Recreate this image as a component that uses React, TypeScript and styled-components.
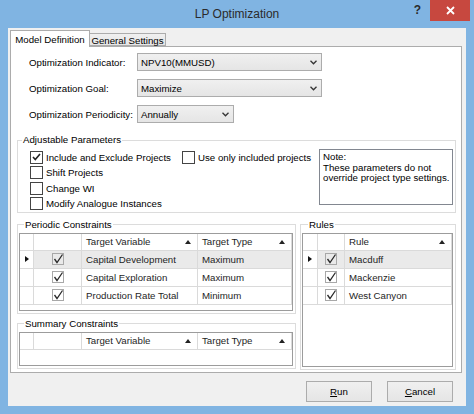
import styled, { createGlobalStyle } from "styled-components";

const GlobalStyle = createGlobalStyle`
  html, body {
    margin: 0;
    padding: 0;
    background: #80b4e2;
  }
  * {
    box-sizing: border-box;
  }
  body {
    font-family: "Liberation Sans", Arial, sans-serif;
    font-size: 9.7px;
    color: #000;
  }
`;

const Window = styled.div`
  width: 474px;
  height: 414px;
  background: #80b4e2;
  display: flex;
  flex-direction: column;
  overflow: hidden;
`;

const TitleBar = styled.div`
  height: 28px;
  display: grid;
  grid-template-columns: 1fr auto 1fr;
`;

const Title = styled.div`
  grid-column: 2;
  font-size: 12px;
  line-height: 28px;
  color: #2b2b2b;
`;

const Controls = styled.div`
  grid-column: 3;
  justify-self: end;
  display: flex;
  align-items: flex-start;
  padding-right: 4px;
`;

const Help = styled.span`
  font-size: 12px;
  font-weight: bold;
  color: #2a2a2a;
  margin: 3px 9px 0 0;
`;

const Close = styled.div`
  width: 40px;
  height: 21px;
  background: #c7483f;
  color: #fff;
  display: flex;
  align-items: center;
  justify-content: center;
`;

const Client = styled.div`
  flex: 1;
  margin: 0 8px 8px;
  background: #f0f0f0;
  display: flex;
  flex-direction: column;
`;

const TabStrip = styled.div`
  height: 18px;
  display: flex;
  align-items: flex-end;
  padding-left: 2px;
`;

const Tab = styled.div<{ $active?: boolean; $w: number }>`
  position: relative;
  z-index: 1;
  width: ${(p) => p.$w}px;
  height: ${(p) => (p.$active ? 17 : 13)}px;
  margin-bottom: ${(p) => (p.$active ? -1 : 0)}px;
  border: 1px solid #acacac;
  border-bottom: ${(p) => (p.$active ? "none" : "1px solid #acacac")};
  border-left: ${(p) => (p.$active ? "1px solid #acacac" : "none")};
  background: ${(p) => (p.$active ? "#fff" : "linear-gradient(#f0f0f0, #e5e5e5)")};
  display: flex;
  align-items: center;
  justify-content: center;
  white-space: nowrap;
  padding-top: ${(p) => (p.$active ? 0 : 1)}px;
`;

const Panel = styled.div`
  height: 327px;
  margin: 0 4px 0 2px;
  border: 1px solid #acacac;
  background: #fff;
  padding: 6px 5px 0 6px;
  display: flex;
  flex-direction: column;
`;

const FormRow = styled.div`
  height: 18px;
  display: flex;
  align-items: center;
  margin-bottom: 8px;
`;

const Label = styled.div`
  width: 120px;
  padding-left: 12px;
  white-space: nowrap;
`;

const Select = styled.div<{ $w: number }>`
  width: ${(p) => p.$w}px;
  height: 18px;
  border: 1px solid #acacac;
  background: linear-gradient(#f0f0f0, #e5e5e5);
  display: flex;
  align-items: center;
  justify-content: space-between;
  padding: 0 4px 0 3px;
`;

const Group = styled.fieldset<{ $pad: string }>`
  margin: 0;
  padding: ${(p) => p.$pad};
  border: 1px solid #dcdcdc;
  min-width: 0;
`;

const Legend = styled.legend<{ $off: number }>`
  padding: 0 1px;
  margin-left: ${(p) => p.$off}px;
  line-height: 12px;
`;

const Adjustable = styled.div`
  display: flex;
  align-items: flex-start;
`;

const CheckColumn = styled.div<{ $w: number }>`
  width: ${(p) => p.$w}px;
  display: flex;
  flex-direction: column;
  padding-top: 0.5px;
`;

const CheckRow = styled.label`
  height: 15.5px;
  display: flex;
  align-items: center;
  gap: 3px;
  white-space: nowrap;
`;

const Box = styled.span`
  width: 13px;
  height: 13px;
  border: 1px solid #444;
  background: #fff;
  display: flex;
  align-items: center;
  justify-content: center;
`;

const Note = styled.div`
  width: 134px;
  height: 56px;
  border: 1px solid #828790;
  background: #fff;
  padding: 2px 3px;
  line-height: 10.5px;
  white-space: nowrap;
  overflow: hidden;
`;

const Lower = styled.div`
  margin-top: 6px;
  display: grid;
  grid-template-columns: 279px 156px;
  column-gap: 4px;
`;

const LeftColumn = styled.div`
  display: flex;
  flex-direction: column;
  gap: 4px;
`;

const Grid = styled.div<{ $cols: string; $h: number }>`
  display: grid;
  grid-template-columns: ${(p) => p.$cols};
  grid-template-rows: 17px;
  grid-auto-rows: 18px;
  align-content: start;
  height: ${(p) => p.$h}px;
  border: 1px solid #9c9c9c;
  background: #fff;
  overflow: hidden;
`;

const Cell = styled.div<{ $sel?: boolean; $center?: boolean }>`
  border-right: 1px solid #dadada;
  border-bottom: 1px solid #dadada;
  background: ${(p) => (p.$sel ? "#eaeaea" : "#fff")};
  display: flex;
  align-items: center;
  justify-content: ${(p) => (p.$center ? "center" : "space-between")};
  padding: ${(p) => (p.$center ? "0" : "0 6px 0 4px")};
  white-space: nowrap;
  overflow: hidden;
  color: #1e1e1e;
`;

const ButtonRow = styled.div`
  display: flex;
  justify-content: flex-end;
  gap: 15px;
  padding-right: 13px;
  margin-top: 8px;
`;

const Button = styled.div`
  width: 66px;
  height: 21px;
  border: 1px solid #acacac;
  background: linear-gradient(#f0f0f0, #e5e5e5);
  display: flex;
  align-items: center;
  justify-content: center;
`;

const Chevron = () => (
  <svg width="7" height="5" viewBox="0 0 7 5">
    <polyline points="0.5,0.8 3.5,3.8 6.5,0.8" fill="none" stroke="#333" strokeWidth="1.3" />
  </svg>
);

const SortUp = () => (
  <svg width="6" height="4" viewBox="0 0 6 4">
    <polygon points="0,4 3,0 6,4" fill="#222" />
  </svg>
);

const RowArrow = () => (
  <svg width="4" height="6" viewBox="0 0 4 6">
    <polygon points="0,0 4,3 0,6" fill="#111" />
  </svg>
);

const Tick = () => (
  <svg width="9" height="8" viewBox="0 0 9 8">
    <polyline points="1,4 3.3,6.5 8,1" fill="none" stroke="#222" strokeWidth="1.6" />
  </svg>
);

const GridCheck = () => (
  <svg width="12" height="12" viewBox="0 0 12 12">
    <rect x="0.5" y="0.5" width="11" height="11" fill="none" stroke="#a8a8a8" />
    <polyline points="2.5,6 5,9.5 10.5,1.5" fill="none" stroke="#2a2a2a" strokeWidth="1.3" />
  </svg>
);

const CloseIcon = () => (
  <svg width="9" height="9" viewBox="0 0 9 9">
    <path d="M1 1 L8 8 M8 1 L1 8" stroke="#fff" strokeWidth="1.8" />
  </svg>
);

const Check = ({ label, checked }: { label: string; checked?: boolean }) => (
  <CheckRow>
    <Box>{checked && <Tick />}</Box>
    {label}
  </CheckRow>
);

const constraintCols = "14px 48px 116px 1fr";

const periodic = [
  { name: "Capital Development", type: "Maximum" },
  { name: "Capital Exploration", type: "Maximum" },
  { name: "Production Rate Total", type: "Minimum" },
];

const rules = ["Macduff", "Mackenzie", "West Canyon"];

const ConstraintHeader = () => (
  <>
    <Cell />
    <Cell />
    <Cell>
      Target Variable
      <SortUp />
    </Cell>
    <Cell>
      Target Type
      <SortUp />
    </Cell>
  </>
);

const App = () => {
  return (
    <Window>
      <GlobalStyle />
      <TitleBar>
        <Title>LP Optimization</Title>
        <Controls>
          <Help>?</Help>
          <Close>
            <CloseIcon />
          </Close>
        </Controls>
      </TitleBar>
      <Client>
        <TabStrip>
          <Tab $active $w={80}>Model Definition</Tab>
          <Tab $w={76}>General Settings</Tab>
        </TabStrip>
        <Panel>
          <FormRow>
            <Label>Optimization Indicator:</Label>
            <Select $w={185}>
              NPV10(MMUSD)
              <Chevron />
            </Select>
          </FormRow>
          <FormRow>
            <Label>Optimization Goal:</Label>
            <Select $w={185}>
              Maximize
              <Chevron />
            </Select>
          </FormRow>
          <FormRow>
            <Label>Optimization Periodicity:</Label>
            <Select $w={97}>
              Annually
              <Chevron />
            </Select>
          </FormRow>

          <Group $pad="3px 1px 0 12px" style={{ marginTop: 3 }}>
            <Legend $off={-8}>Adjustable Parameters</Legend>
            <Adjustable>
              <CheckColumn $w={152}>
                <Check label="Include and Exclude Projects" checked />
                <Check label="Shift Projects" />
                <Check label="Change WI" />
                <Check label="Modify Analogue Instances" />
              </CheckColumn>
              <CheckColumn $w={137}>
                <Check label="Use only included projects" />
              </CheckColumn>
              <Note>
                Note:
                <br />
                These parameters do not
                <br />
                override project type settings.
              </Note>
            </Adjustable>
          </Group>

          <Lower>
            <LeftColumn>
              <Group $pad="2px 2px 2px 1px">
                <Legend $off={5}>Periodic Constraints</Legend>
                <Grid $cols={constraintCols} $h={78}>
                  <ConstraintHeader />
                  {periodic.map((row, i) => (
                    <>
                      <Cell $center key={`a${i}`}>{i === 0 && <RowArrow />}</Cell>
                      <Cell $center $sel={i === 0} key={`b${i}`}>
                        <GridCheck />
                      </Cell>
                      <Cell $sel={i === 0} key={`c${i}`}>{row.name}</Cell>
                      <Cell $sel={i === 0} key={`d${i}`}>{row.type}</Cell>
                    </>
                  ))}
                </Grid>
              </Group>
              <Group $pad="2px 2px 2px 1px">
                <Legend $off={5}>Summary Constraints</Legend>
                <Grid $cols={constraintCols} $h={34}>
                  <ConstraintHeader />
                </Grid>
              </Group>
            </LeftColumn>
            <Group $pad="2px 2px 2px 1px">
              <Legend $off={6}>Rules</Legend>
              <Grid $cols="15px 27px 1fr" $h={134}>
                <Cell />
                <Cell />
                <Cell>
                  Rule
                  <SortUp />
                </Cell>
                {rules.map((r, i) => (
                  <>
                    <Cell $center key={`a${i}`}>{i === 0 && <RowArrow />}</Cell>
                    <Cell $center $sel={i === 0} key={`b${i}`}>
                      <GridCheck />
                    </Cell>
                    <Cell $sel={i === 0} key={`c${i}`}>{r}</Cell>
                  </>
                ))}
              </Grid>
            </Group>
          </Lower>
        </Panel>
        <ButtonRow>
          <Button>
            <u>R</u>un
          </Button>
          <Button>
            <u>C</u>ancel
          </Button>
        </ButtonRow>
      </Client>
    </Window>
  );
};

export default App;
